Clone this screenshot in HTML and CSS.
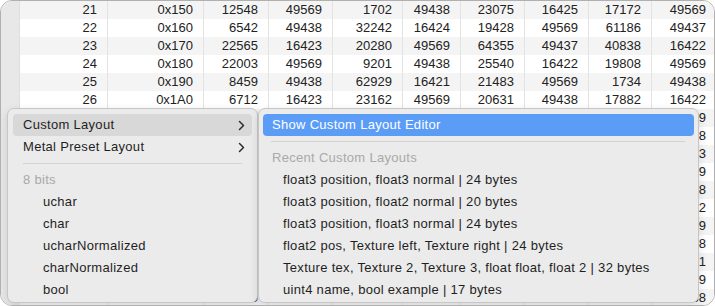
FILE: index.html
```html
<!DOCTYPE html>
<html lang="en">
<head>
  <meta charset="UTF-8">
  <title>Buffer viewer</title>
  <link rel="stylesheet" href="styles.css">
</head>
<body>
<div class="window">
  <div class="gutter"></div>
  <div class="grid">
    <div class="row"><span>21</span><span>0x150</span><span>12548</span><span>49569</span><span>1702</span><span>49438</span><span>23075</span><span>16425</span><span>17172</span><span>49569</span></div>
    <div class="row"><span>22</span><span>0x160</span><span>6542</span><span>49438</span><span>32242</span><span>16424</span><span>19428</span><span>49569</span><span>61186</span><span>49437</span></div>
    <div class="row"><span>23</span><span>0x170</span><span>22565</span><span>16423</span><span>20280</span><span>49569</span><span>64355</span><span>49437</span><span>40838</span><span>16422</span></div>
    <div class="row"><span>24</span><span>0x180</span><span>22003</span><span>49569</span><span>9201</span><span>49438</span><span>25540</span><span>16422</span><span>19808</span><span>49569</span></div>
    <div class="row"><span>25</span><span>0x190</span><span>8459</span><span>49438</span><span>62929</span><span>16421</span><span>21483</span><span>49569</span><span>1734</span><span>49438</span></div>
    <div class="row"><span>26</span><span>0x1A0</span><span>6712</span><span>16423</span><span>23162</span><span>49569</span><span>20631</span><span>49438</span><span>17882</span><span>16422</span></div>
    <div class="row"><span>27</span><span>0x1B0</span><span>30214</span><span>49569</span><span>5120</span><span>49438</span><span>11872</span><span>16422</span><span>40210</span><span>49569</span></div>
    <div class="row"><span>28</span><span>0x1C0</span><span>9821</span><span>16424</span><span>44102</span><span>49569</span><span>3321</span><span>49437</span><span>28844</span><span>49438</span></div>
    <div class="row"><span>29</span><span>0x1D0</span><span>15503</span><span>49438</span><span>7712</span><span>16422</span><span>58120</span><span>49569</span><span>12290</span><span>16423</span></div>
    <div class="row"><span>30</span><span>0x1E0</span><span>27761</span><span>16423</span><span>39014</span><span>49569</span><span>14432</span><span>49438</span><span>6021</span><span>49569</span></div>
    <div class="row"><span>31</span><span>0x1F0</span><span>4410</span><span>49569</span><span>51200</span><span>49438</span><span>26610</span><span>16421</span><span>33410</span><span>49438</span></div>
    <div class="row"><span>32</span><span>0x200</span><span>18320</span><span>49438</span><span>2048</span><span>16424</span><span>47730</span><span>49569</span><span>9906</span><span>16422</span></div>
    <div class="row"><span>33</span><span>0x210</span><span>21006</span><span>16422</span><span>36601</span><span>49569</span><span>8810</span><span>49437</span><span>51112</span><span>49569</span></div>
    <div class="row"><span>34</span><span>0x220</span><span>7230</span><span>49569</span><span>12288</span><span>49438</span><span>30041</span><span>16422</span><span>22718</span><span>49438</span></div>
    <div class="row"><span>35</span><span>0x230</span><span>33017</span><span>49438</span><span>4602</span><span>16423</span><span>19970</span><span>49569</span><span>14330</span><span>16421</span></div>
    <div class="row"><span>36</span><span>0x240</span><span>11452</span><span>16421</span><span>28700</span><span>49569</span><span>6632</span><span>49438</span><span>37790</span><span>49569</span></div>
    <div class="row"><span>37</span><span>0x250</span><span>25630</span><span>49569</span><span>16006</span><span>49438</span><span>42210</span><span>16422</span><span>2871</span><span>49438</span></div>
  </div>

  <div class="menus">
    <div class="menu">
      <div class="item active">Custom Layout
        <svg class="chev" width="7" height="11" viewBox="0 0 7 11"><path d="M1.5 1.5 L5.5 5.5 L1.5 9.5" fill="none" stroke="#2b2b2b" stroke-width="1.5" stroke-linecap="round" stroke-linejoin="round"/></svg>
      </div>
      <div class="item">Metal Preset Layout
        <svg class="chev" width="7" height="11" viewBox="0 0 7 11"><path d="M1.5 1.5 L5.5 5.5 L1.5 9.5" fill="none" stroke="#2b2b2b" stroke-width="1.5" stroke-linecap="round" stroke-linejoin="round"/></svg>
      </div>
      <div class="sep"></div>
      <div class="item head">8 bits</div>
      <div class="item sub">uchar</div>
      <div class="item sub">char</div>
      <div class="item sub">ucharNormalized</div>
      <div class="item sub">charNormalized</div>
      <div class="item sub">bool</div>
    </div>

    <div class="menu submenu">
      <div class="item selected">Show Custom Layout Editor</div>
      <div class="sep"></div>
      <div class="item head">Recent Custom Layouts</div>
      <div class="item sub">float3 position, float3 normal | 24 bytes</div>
      <div class="item sub">float3 position, float2 normal | 20 bytes</div>
      <div class="item sub">float3 position, float3 normal | 24 bytes</div>
      <div class="item sub">float2 pos, Texture left, Texture right | 24 bytes</div>
      <div class="item sub">Texture tex, Texture 2, Texture 3, float float, float 2 | 32 bytes</div>
      <div class="item sub">uint4 name, bool example | 17 bytes</div>
    </div>
  </div>
</div>
</body>
</html>
```

FILE: styles.css
```css
body {
  margin: 0;
  background: #fff;
  font-family: "Liberation Sans", Arial, sans-serif;
  font-size: 13px;
  color: #222;
}

.window {
  position: relative;
  width: 715px;
  height: 306px;
  box-sizing: border-box;
  border: 1px solid #b0b0b0;
  border-radius: 12px;
  overflow: hidden;
  display: flex;
  background: #fff;
}

.gutter {
  width: 18px;
  flex-shrink: 0;
  background: #e8e8e8;
  border-right: 1px solid #dedede;
}

.grid {
  flex-shrink: 0;
}

.row {
  display: grid;
  grid-template-columns: 88px 96px 65px 64px 70px 58px 64px 64px 63px 65px;
  height: 18px;
  line-height: 18px;
}
.row:nth-child(odd) {
  background: #f4f4f4;
}
.row span {
  text-align: right;
  padding-right: 10px;
  border-right: 1px solid #e3e3e3;
  white-space: nowrap;
}

/* context menu + submenu */
.menus {
  position: absolute;
  top: 107px;
  left: 6px;
  display: flex;
  align-items: flex-start;
}

.menu {
  box-sizing: border-box;
  width: 251px;
  height: 195px;
  padding: 5px;
  background: #ebebeb;
  border: 1px solid #c6c6c6;
  border-radius: 7px;
  box-shadow: 0 3px 10px rgba(0, 0, 0, 0.12);
  color: #1f1f1f;
  letter-spacing: 0.3px;
}
.submenu {
  width: 441px;
  padding: 5px 4px;
}

.item {
  position: relative;
  height: 22px;
  line-height: 22px;
  padding-left: 10px;
  border-radius: 4px;
  white-space: nowrap;
}
.item.active {
  background: #d8d8d8;
}
.item.selected {
  background: #5b9cf6;
  color: #fff;
  padding-left: 9px;
}
.item.head {
  color: #a9a9a9;
}
.menu .sub {
  padding-left: 30px;
}
.submenu .head {
  padding-left: 9px;
}
.submenu .sub {
  padding-left: 20px;
}

.chev {
  position: absolute;
  right: 7px;
  top: 6px;
}

.sep {
  height: 1px;
  margin: 5px 10px;
  background: #d3d3d3;
}
.submenu .sep {
  margin: 5px 9px 5px 8px;
}
```
